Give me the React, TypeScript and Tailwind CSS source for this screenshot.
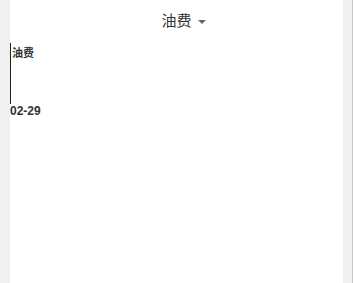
export default function App() {
  return (
    <div
      className="flex h-screen w-full bg-white text-[#333]"
      style={{ fontFamily: '"Liberation Sans", "Noto Sans CJK SC", sans-serif' }}
    >
      <div className="w-[10px] shrink-0 bg-[#f0f0f0]" />
      <main className="flex flex-1 flex-col">
        <div className="flex items-center justify-center pt-[10px] h-[30px]">
          <span className="relative text-[15px] leading-none">
            油费
            <span className="absolute left-full top-1/2 ml-[6px] h-0 w-0 border-x-[4px] border-t-[4px] border-x-transparent border-t-[#666]" />
          </span>
        </div>
        <div className="mt-[13px] flex h-[61px] border-l border-[#222]">
          <span className="ml-[1px] mt-[5px] text-[11px] font-bold leading-none text-[#333]">油费</span>
        </div>
        <div className="text-[12px] font-bold leading-[14px] text-[#333]">02-29</div>
      </main>
      <div className="w-[10px] shrink-0 border-r border-[#c8c8c8] bg-[#f0f0f0]" />
    </div>
  );
}
